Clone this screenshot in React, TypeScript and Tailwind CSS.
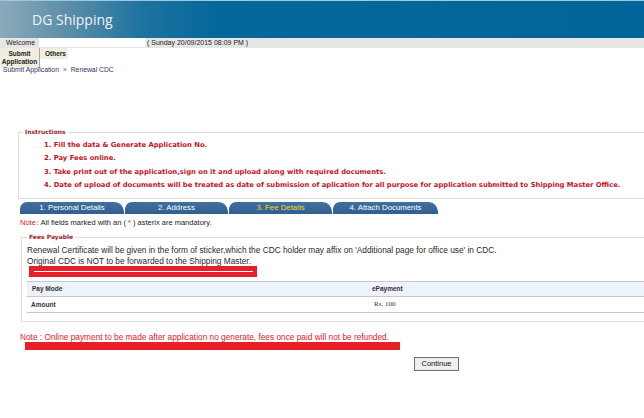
import { FC } from 'react'

const instructions = [
  '1. Fill the data & Generate Application No.',
  '2. Pay Fees online.',
  '3. Take print out of the application,sign on it and upload along with required documents.',
  '4. Date of upload of documents will be treated as date of submission of aplication for all purpose for application submitted to Shipping Master Office.',
]

const tabs = [
  { label: '1. Personal Details', w: 'w-[105px]', active: false },
  { label: '2. Address', w: 'w-[104px]', active: false },
  { label: '3. Fee Details', w: 'w-[104px]', active: true },
  { label: '4. Attach Documents', w: 'w-[106px]', active: false },
]

const arial = "font-['Liberation_Sans',Arial,sans-serif]"
const verdana = "font-['DejaVu_Sans',Verdana,sans-serif]"

const Header: FC = () => (
  <div className="h-[38px] border-t border-[#9cc8e6] bg-[linear-gradient(90deg,#8aaabb_0%,#5f8fa8_10%,#1d73a0_22%,#05679a_34%,#03669a_100%)] flex items-center">
    <span className="ml-[32px] text-[14px] leading-none text-[#eef4f8] font-['Open_Sans',sans-serif]">
      DG Shipping
    </span>
  </div>
)

const Fieldset: FC<{ legend: string; className?: string; children: React.ReactNode }> = ({ legend, className, children }) => (
  <fieldset className={`border border-[#dedede] ${className ?? ''}`}>
    <legend className={`px-[2px] text-[6px] leading-[8px] font-bold text-[#a3232a] ${verdana}`}>{legend}</legend>
    {children}
  </fieldset>
)

export default function App() {
  return (
    <div className={`w-[644px] h-[418px] overflow-hidden bg-white ${arial}`}>
      <Header />

      {/* welcome bar */}
      <div className="h-[10px] bg-[#e6e6e6] flex items-center text-[7px] text-[#222]">
        <span className="ml-[6px] w-[33px]">Welcome</span>
        <span className="w-[106px] h-[9px] bg-white self-start" />
        <span className="ml-[2px]">( Sunday 20/09/2015 08:09 PM )</span>
      </div>

      {/* menu */}
      <div className="flex h-[20px] text-[6.5px] font-bold text-[#222]">
        <div className="w-[40px] border-r border-[#a9a9a0] bg-[#efeee0] flex flex-col items-center justify-center leading-[8.5px]">
          <span>Submit</span>
          <span>Application</span>
        </div>
        <div className="w-[28px] h-[11px] bg-[#efeee0] flex items-center pl-[5px]">Others</div>
      </div>

      {/* breadcrumb */}
      <div className="h-[9px] mt-[-2px] pl-[3px] flex items-center text-[6.8px] text-[#2f3566]">
        Submit Application <span className="mx-[4px] text-[#d0343a]">»</span> Renewal CDC
      </div>

      {/* instructions */}
      <Fieldset legend="Instructions" className="mt-[53px] ml-[18px] w-[640px] pl-[4px] pb-[6px]">
        <ul className={`mt-[3px] pl-[21px] text-[6.8px] leading-[13.3px] font-bold text-[#c5141c] ${verdana}`}>
          {instructions.map((t) => (
            <li key={t} className="whitespace-nowrap">{t}</li>
          ))}
        </ul>
      </Fieldset>

      {/* tabs */}
      <div className="mt-[3px] ml-[20px] flex">
        {tabs.map((t) => (
          <div
            key={t.label}
            className={`${t.w} h-[12px] rounded-tl-[7px] rounded-tr-[10px] border-r border-white bg-[linear-gradient(180deg,#41709f_0%,#315f8f_100%)] flex items-center justify-center text-[7.8px] ${t.active ? 'text-[#f5dc2c]' : 'text-white'}`}
          >
            {t.label}
          </div>
        ))}
      </div>

      <div className="mt-[3px] ml-[20px] h-[10px] flex items-center text-[7.5px] text-[#222] whitespace-nowrap">
        <span className="text-[#e02020]">Note</span>
        <span className="ml-[1px]">: All fields marked with an (</span>
        <span className="mx-[2px] text-[#e02020]">*</span>
        <span>) asterix are mandatory.</span>
      </div>

      {/* fees payable */}
      <Fieldset legend="Fees Payable" className="mt-[6px] ml-[21px] w-[640px] pl-[5px] pb-[8px]">
        <div className="mt-[4px] text-[8.3px] leading-[10.5px] text-[#2a2a2a]">
          <p className="whitespace-nowrap">
            Renewal Certificate will be given in the form of sticker,which the CDC holder may affix on 'Additional page for office use' in CDC.
          </p>
          <p>Original CDC is NOT to be forwarded to the Shipping Master.</p>
        </div>
        <div className="ml-[2px] w-[228px] h-[11px] bg-[#e81f27] flex items-center justify-center">
          <div className="w-[219px] h-[1px] bg-white" />
        </div>
        <div className="mt-[4px] text-[6.5px] text-[#333]">
          <div className="h-[16px] border-y border-[#c8c8c8] bg-[#eef2fa] flex items-center font-bold">
            <span className="pl-[5px] w-[345px]">Pay Mode</span>
            <span>ePayment</span>
          </div>
          <div className="h-[16px] border-b border-[#c8c8c8] flex items-center">
            <span className="pl-[4px] w-[345px] font-bold">Amount</span>
            <span className="pl-[2px] text-[7px] font-['Liberation_Serif',serif]">Rs. 100</span>
          </div>
        </div>
      </Fieldset>

      {/* note */}
      <div className="mt-[10px] ml-[20px] h-[10px] flex items-center text-[8.3px] text-[#e0191f] whitespace-nowrap">
        Note : Online payment to be made after application no generate, fees once paid will not be refunded.
      </div>
      <div className="ml-[25px] w-[375px] h-[8px] bg-[#e81f27]" />

      <div className="mt-[7px] ml-[414px] flex">
        <button className="w-[45px] h-[14px] border border-[#707070] bg-[#f0f0f0] text-[7.5px] text-[#111] leading-none">
          Continue
        </button>
      </div>
    </div>
  )
}
